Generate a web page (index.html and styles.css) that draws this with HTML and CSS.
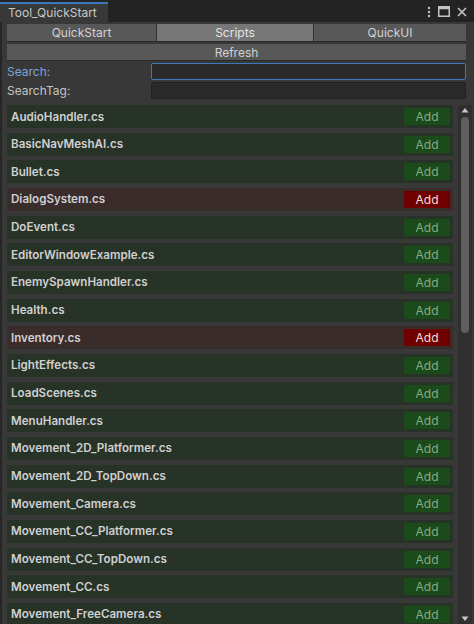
FILE: index.html
```html
<!DOCTYPE html>
<html>
<head>
<meta charset="utf-8">
<link rel="stylesheet" href="styles.css">
</head>
<body>
<div class="window">
  <div class="titlebar">
    <div class="tab">Tool_QuickStart</div>
    <div class="winicons">
      <svg width="4" height="12" viewBox="0 0 4 12"><circle cx="2" cy="2" r="1.2" fill="#c4c4c4"/><circle cx="2" cy="6" r="1.2" fill="#c4c4c4"/><circle cx="2" cy="10" r="1.2" fill="#c4c4c4"/></svg>
      <svg width="12" height="11" viewBox="0 0 12 11"><rect x="0.75" y="0.75" width="10.5" height="9.5" fill="none" stroke="#c4c4c4" stroke-width="1.5"/><rect x="0.75" y="0.75" width="10.5" height="2.5" fill="#c4c4c4"/></svg>
      <svg width="10" height="10" viewBox="0 0 10 10"><path d="M1 1 L9 9 M9 1 L1 9" stroke="#c4c4c4" stroke-width="1.6"/></svg>
    </div>
  </div>
  <div class="panel">
    <div class="toolbar">
      <div class="tbtn tb1">QuickStart</div>
      <div class="tbtn tb2 active">Scripts</div>
      <div class="tbtn tb3">QuickUI</div>
    </div>
    <div class="refresh">Refresh</div>
    <div class="field">
      <span class="flabel focused">Search:</span>
      <div class="finput focus"></div>
    </div>
    <div class="field">
      <span class="flabel">SearchTag:</span>
      <div class="finput"></div>
    </div>
    <div class="listwrap">
      <div class="list">
        <div class="row ok"><span class="name">AudioHandler.cs</span><span class="add">Add</span></div>
        <div class="row ok"><span class="name">BasicNavMeshAI.cs</span><span class="add">Add</span></div>
        <div class="row ok"><span class="name">Bullet.cs</span><span class="add">Add</span></div>
        <div class="row bad"><span class="name">DialogSystem.cs</span><span class="add">Add</span></div>
        <div class="row ok"><span class="name">DoEvent.cs</span><span class="add">Add</span></div>
        <div class="row ok"><span class="name">EditorWindowExample.cs</span><span class="add">Add</span></div>
        <div class="row ok"><span class="name">EnemySpawnHandler.cs</span><span class="add">Add</span></div>
        <div class="row ok"><span class="name">Health.cs</span><span class="add">Add</span></div>
        <div class="row bad"><span class="name">Inventory.cs</span><span class="add">Add</span></div>
        <div class="row ok"><span class="name">LightEffects.cs</span><span class="add">Add</span></div>
        <div class="row ok"><span class="name">LoadScenes.cs</span><span class="add">Add</span></div>
        <div class="row ok"><span class="name">MenuHandler.cs</span><span class="add">Add</span></div>
        <div class="row ok"><span class="name">Movement_2D_Platformer.cs</span><span class="add">Add</span></div>
        <div class="row ok"><span class="name">Movement_2D_TopDown.cs</span><span class="add">Add</span></div>
        <div class="row ok"><span class="name">Movement_Camera.cs</span><span class="add">Add</span></div>
        <div class="row ok"><span class="name">Movement_CC_Platformer.cs</span><span class="add">Add</span></div>
        <div class="row ok"><span class="name">Movement_CC_TopDown.cs</span><span class="add">Add</span></div>
        <div class="row ok"><span class="name">Movement_CC.cs</span><span class="add">Add</span></div>
        <div class="row ok"><span class="name">Movement_FreeCamera.cs</span><span class="add">Add</span></div>
      </div>
      <div class="scrollbar">
        <svg class="arrow" width="8" height="6" viewBox="0 0 8 6"><path d="M4 1 L7.5 5.5 L0.5 5.5 Z" fill="#c8c8c8"/></svg>
        <div class="track"><div class="thumb"></div></div>
        <svg class="arrow" width="8" height="6" viewBox="0 0 8 6"><path d="M4 5 L7.5 0.5 L0.5 0.5 Z" fill="#c8c8c8"/></svg>
      </div>
    </div>
  </div>
</div>
</body>
</html>
```
FILE: styles.css
```css
html, body {
  margin: 0;
  padding: 0;
  background: #383838;
  width: 474px;
  height: 624px;
  overflow: hidden;
  font-family: Inter, "Noto Sans", sans-serif;
  font-size: 12px;
  color: #c4c4c4;
}
.window {
  width: 474px;
  height: 624px;
  display: flex;
  flex-direction: column;
}
.titlebar {
  height: 22px;
  flex: none;
  background: #232323;
  display: flex;
  align-items: flex-end;
  justify-content: space-between;
}
.tab {
  width: 100px;
  height: 18px;
  background: #383838;
  border-top: 2px solid #3a79bb;
  padding-left: 8px;
  line-height: 18px;
  color: #c8c8c8;
  font-size: 12px;
}
.winicons {
  align-self: center;
  display: flex;
  align-items: center;
  gap: 7px;
  padding-right: 7px;
  margin-top: 1px;
}
.panel {
  flex: 1;
  border-left: 2px solid #262626;
  padding: 2px 0 0 5px;
  display: flex;
  flex-direction: column;
  min-height: 0;
}
.toolbar {
  display: flex;
  height: 18px;
  width: 459px;
}
.tbtn {
  background: #585858;
  text-align: center;
  line-height: 18px;
  color: #d2d2d2;
  border-bottom: 1px solid #2a2a2a;
  box-sizing: border-box;
}
.tb1 { width: 150px; border-right: 1px solid #303030; }
.tb2 { width: 156px; }
.tb3 { width: 153px; border-left: 1px solid #303030; }
.tbtn.active { background: #777777; color: #e4e4e4; }
.refresh {
  margin-top: 2px;
  width: 459px;
  height: 17px;
  background: #585858;
  text-align: center;
  line-height: 17px;
  color: #d2d2d2;
  border-bottom: 1px solid #2a2a2a;
  box-sizing: border-box;
}
.field {
  display: flex;
  align-items: center;
  height: 17px;
  margin-top: 2px;
  width: 459px;
}
.field:first-of-type { margin-top: 3px; }
.flabel {
  width: 144px;
  padding-left: 0;
  color: #c4c4c4;
}
.flabel.focused { color: #7ba4dd; }
.finput {
  flex: 1;
  height: 17px;
  box-sizing: border-box;
  background: #2a2a2a;
  border: 1px solid #212121;
  border-radius: 2px;
}
.finput.focus { border-color: #3a79bb; }
.listwrap {
  display: flex;
  margin-top: 6px;
  flex: 1;
  min-height: 0;
}
.list {
  width: 446px;
  display: flex;
  flex-direction: column;
  gap: 4.67px;
  overflow: hidden;
}
.row {
  flex: none;
  height: 23px;
  display: flex;
  align-items: center;
  justify-content: space-between;
  padding: 0 3px 0 4px;
}
.row.ok { background: #283328; }
.row.bad { background: #3b2c2c; }
.name {
  font-weight: 600;
  color: #d0d0d0;
  font-size: 11.6px;
}
.add {
  width: 46px;
  height: 17px;
  line-height: 17px;
  text-align: center;
  font-size: 12px;
}
.ok .add { background: #1b4a1b; color: #86aa86; }
.bad .add { background: #700000; color: #f0dede; }
.scrollbar {
  width: 14px;
  margin-left: 5px;
  display: flex;
  flex-direction: column;
  align-items: center;
  background: #2f2f2f;
}
.arrow { flex: none; margin: 2px 0; }
.track {
  flex: 1;
  width: 100%;
  display: flex;
  justify-content: center;
}
.thumb {
  width: 8px;
  height: 216px;
  margin-top: 2px;
  background: #5f5f5f;
  border-radius: 4px;
}
```
